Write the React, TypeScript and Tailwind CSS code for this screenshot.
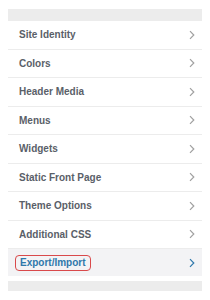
import React from "react";

const items = [
  "Site Identity",
  "Colors",
  "Header Media",
  "Menus",
  "Widgets",
  "Static Front Page",
  "Theme Options",
  "Additional CSS",
];

function Chevron({ color }: { color: string }) {
  return (
    <svg width="6" height="10" viewBox="0 0 6 10" fill="none">
      <path d="M1 1.2l3.8 3.8L1 8.8" stroke={color} strokeWidth="1.2" />
    </svg>
  );
}

export default function App() {
  return (
    <div
      className="w-[210px] h-[300px] bg-white px-[8px] pt-[9px]"
      style={{ fontFamily: '"Liberation Sans", Arial, sans-serif' }}
    >
      <div className="h-[12px] bg-[#ececec]" />
      <div className="flex flex-col">
        {items.map((t) => (
          <div
            key={t}
            className="h-[28.5px] flex items-center justify-between pl-[11px] pr-[7px] bg-white border-b border-[#ececec]"
          >
            <span className="text-[10px] font-bold text-[#5a6068]">{t}</span>
            <Chevron color="#a0a0a0" />
          </div>
        ))}
        <div className="h-[27px] flex items-center justify-between pl-[7px] pr-[7px] bg-[#f3f3f5]">
          <span className="text-[10px] font-bold text-[#2e78ab] border border-[#d9494b] rounded-[4px] px-[4px] h-[16px] flex items-center">
            Export/Import
          </span>
          <Chevron color="#2e78ab" />
        </div>
      </div>
      <div className="h-[10px] mt-[5px] bg-[#ececec]" />
    </div>
  );
}
